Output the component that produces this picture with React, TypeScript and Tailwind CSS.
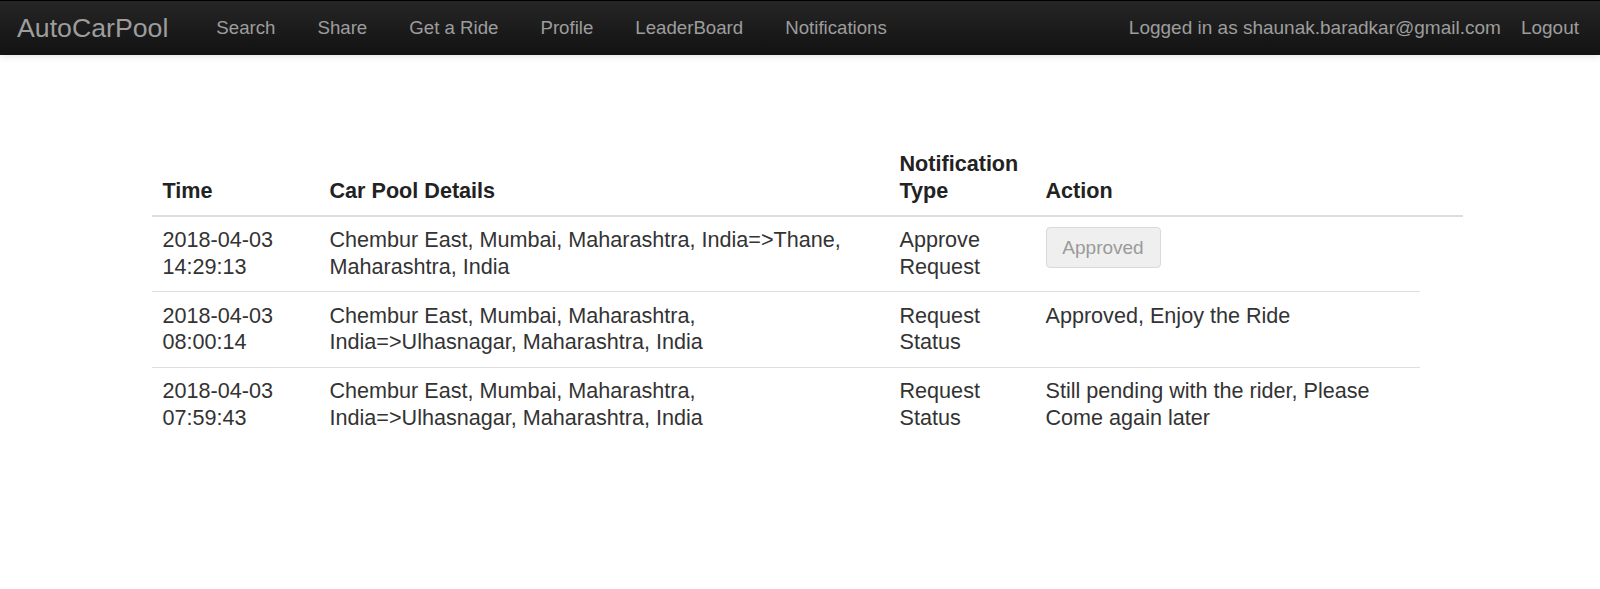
import React from "react";

type Row = {
  time: [string, string];
  details: React.ReactNode;
  type: [string, string];
  action: React.ReactNode;
  extra?: boolean;
};

const navLinks = ["Search", "Share", "Get a Ride", "Profile", "LeaderBoard", "Notifications"];

const rows: Row[] = [
  {
    time: ["2018-04-03", "14:29:13"],
    details: (
      <>
        Chembur East, Mumbai, Maharashtra, India=&gt;Thane,
        <br />
        Maharashtra, India
      </>
    ),
    type: ["Approve", "Request"],
    action: (
      <button
        disabled
        className="h-[41px] w-[115px] rounded-[4px] border border-[#d9d9d9] bg-[#efefef] text-[19px] leading-[26px] text-[#9a9a9a]"
      >
        Approved
      </button>
    ),
    extra: true,
  },
  {
    time: ["2018-04-03", "08:00:14"],
    details: (
      <>
        Chembur East, Mumbai, Maharashtra,
        <br />
        India=&gt;Ulhasnagar, Maharashtra, India
      </>
    ),
    type: ["Request", "Status"],
    action: "Approved, Enjoy the Ride",
  },
  {
    time: ["2018-04-03", "07:59:43"],
    details: (
      <>
        Chembur East, Mumbai, Maharashtra,
        <br />
        India=&gt;Ulhasnagar, Maharashtra, India
      </>
    ),
    type: ["Request", "Status"],
    action: (
      <>
        Still pending with the rider, Please
        <br />
        Come again later
      </>
    ),
  },
];

function Navbar() {
  return (
    <nav className="flex h-[55px] items-center border-t border-black bg-gradient-to-b from-[#262626] to-[#121212] shadow-[0_1px_8px_rgba(0,0,0,0.12)]">
      <span className="pl-[17px] text-[26.7px] leading-[30px] text-[#9d9d9d]">AutoCarPool</span>
      <ul className="ml-[27px] flex items-center">
        {navLinks.map((link) => (
          <li key={link} className="px-[21px] text-[18.67px] leading-[26px] text-[#9d9d9d]">
            {link}
          </li>
        ))}
      </ul>
      <div className="ml-auto flex items-center pr-[21px] text-[19px] leading-[26px] text-[#9d9d9d]">
        <span>Logged in as shaunak.baradkar@gmail.com</span>
        <span className="ml-[20px]">Logout</span>
      </div>
    </nav>
  );
}

export default function App() {
  return (
    <div className="min-h-[589px] bg-white font-['Liberation_Sans',Arial,sans-serif] text-[#333]">
      <Navbar />
      <div className="pl-[152px] pt-[86px]">
        <table className="w-[1311px] text-left text-[21.6px] leading-[26.8px]">
          <thead>
            <tr>
              <th className="w-[167px] border-b-2 border-[#ddd] px-[10.5px] py-[10px] align-bottom font-bold text-[#222]">Time</th>
              <th className="w-[570px] border-b-2 border-[#ddd] px-[10.5px] py-[10px] align-bottom font-bold text-[#222]">Car Pool Details</th>
              <th className="w-[146px] border-b-2 border-[#ddd] px-[10.5px] py-[10px] align-bottom font-bold text-[#222]">
                Notification
                <br />
                Type
              </th>
              <th className="w-[385px] border-b-2 border-[#ddd] px-[10.5px] py-[10px] align-bottom font-bold text-[#222]">Action</th>
              <th className="w-[43px] border-b-2 border-[#ddd] p-[10px] align-bottom"></th>
            </tr>
          </thead>
          <tbody>
            {rows.map((row, i) => (
              <tr key={i}>
                <td className={`px-[10.5px] py-[10.5px] align-top ${i > 0 ? "border-t border-[#ddd]" : ""}`}>
                  {row.time[0]}
                  <br />
                  {row.time[1]}
                </td>
                <td className={`px-[10.5px] py-[10.5px] align-top ${i > 0 ? "border-t border-[#ddd]" : ""}`}>{row.details}</td>
                <td className={`px-[10.5px] py-[10.5px] align-top ${i > 0 ? "border-t border-[#ddd]" : ""}`}>
                  {row.type[0]}
                  <br />
                  {row.type[1]}
                </td>
                <td className={`px-[10.5px] py-[10.5px] align-top ${i > 0 ? "border-t border-[#ddd]" : ""}`}>{row.action}</td>
                {row.extra ? <td className="p-[10px]"></td> : null}
              </tr>
            ))}
          </tbody>
        </table>
      </div>
    </div>
  );
}
